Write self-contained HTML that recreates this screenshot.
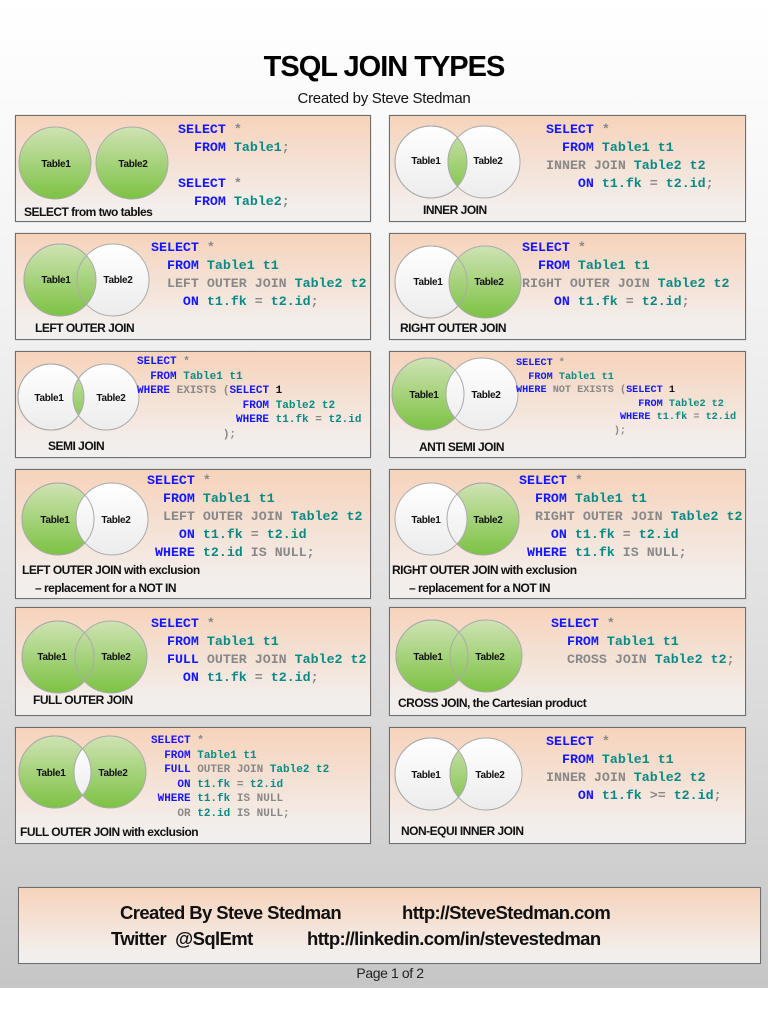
<!DOCTYPE html>
<html><head><meta charset="utf-8"><style>
*{margin:0;padding:0;box-sizing:border-box}
body{width:768px;height:1024px;position:relative;overflow:hidden;background:#fff;font-family:"Liberation Sans",sans-serif}
#bg{position:absolute;left:0;top:0;width:768px;height:988px;background:linear-gradient(#fff 0%,#f2f2f2 30%,#dcdcdc 70%,#c6c6c6 100%)}
.box{position:absolute;border:1px solid #6e6e6e;background:linear-gradient(#f6d3bb,#f3eeeb 85%,#f1efee);box-shadow:0 0 1px #aaa}
pre{position:absolute;font-family:"Liberation Mono",monospace;font-weight:bold;font-size:13.3px;line-height:18px;color:#888;white-space:pre}
pre.s{font-size:11px;line-height:14.6px}
.k{color:#1515ff}.t{color:#0a8a84}.b{color:#111}
.cap{position:absolute;font-weight:bold;font-size:12px;color:#111;letter-spacing:-0.5px;white-space:nowrap;line-height:18px}
svg{position:absolute;left:0;top:0}
svg text{font-family:"Liberation Sans",sans-serif;font-weight:bold;font-size:10px;fill:#111;text-anchor:middle;letter-spacing:-0.3px}
</style></head><body>
<div id="bg"></div>
<div style="position:absolute;left:0;width:768px;top:51px;text-align:center;font-weight:bold;font-size:29px;letter-spacing:-1px;color:#000">TSQL JOIN TYPES</div>
<div style="position:absolute;left:0;width:768px;top:90px;text-align:center;font-size:15px;color:#111;letter-spacing:-0.3px">Created by Steve Stedman</div>

<div class="box" style="left:15px;top:115px;width:356px;height:107px"></div>
<div class="box" style="left:389px;top:115px;width:357px;height:107px"></div>
<div class="box" style="left:15px;top:233px;width:356px;height:107px"></div>
<div class="box" style="left:389px;top:233px;width:357px;height:107px"></div>
<div class="box" style="left:15px;top:351px;width:356px;height:107px"></div>
<div class="box" style="left:389px;top:351px;width:357px;height:107px"></div>
<div class="box" style="left:15px;top:469px;width:356px;height:130px"></div>
<div class="box" style="left:389px;top:469px;width:357px;height:130px"></div>
<div class="box" style="left:15px;top:607px;width:356px;height:109px"></div>
<div class="box" style="left:389px;top:607px;width:357px;height:109px"></div>
<div class="box" style="left:15px;top:727px;width:356px;height:117px"></div>
<div class="box" style="left:389px;top:727px;width:357px;height:117px"></div>

<svg width="768" height="1024">
<defs>
<linearGradient id="g" x1="0" y1="0" x2="0" y2="1"><stop offset="0" stop-color="#cfe3b4"/><stop offset="1" stop-color="#7cc243"/></linearGradient>
<linearGradient id="w" x1="0" y1="0" x2="0" y2="1"><stop offset="0" stop-color="#fff"/><stop offset="1" stop-color="#ececec"/></linearGradient>
<clipPath id="c2"><circle cx="431" cy="162" r="36"/></clipPath>
<clipPath id="c3"><circle cx="60" cy="280" r="36"/></clipPath>
<clipPath id="c5"><circle cx="51" cy="397" r="33"/></clipPath>
<clipPath id="c11"><circle cx="55" cy="772" r="36"/></clipPath>
<clipPath id="c12"><circle cx="431" cy="774" r="36"/></clipPath>
</defs>
<g stroke="#aaa" stroke-width="1">
<circle cx="55" cy="163" r="36" fill="url(#g)"/><circle cx="132" cy="163" r="36" fill="url(#g)"/>

<circle cx="431" cy="162" r="36" fill="url(#w)"/><circle cx="484" cy="162" r="36" fill="url(#w)"/>
<circle cx="484" cy="162" r="36" fill="url(#g)" clip-path="url(#c2)"/><circle cx="431" cy="162" r="36" fill="none"/>

<circle cx="60" cy="280" r="36" fill="url(#g)"/><circle cx="113" cy="280" r="36" fill="url(#w)"/>
<circle cx="113" cy="280" r="36" fill="url(#g)" clip-path="url(#c3)"/><circle cx="60" cy="280" r="36" fill="none"/>

<circle cx="431" cy="282" r="36" fill="url(#w)"/><circle cx="485" cy="282" r="36" fill="url(#g)"/><circle cx="431" cy="282" r="36" fill="none"/>

<circle cx="51" cy="397" r="33" fill="url(#w)"/><circle cx="106" cy="397" r="33" fill="url(#w)"/>
<circle cx="106" cy="397" r="33" fill="url(#g)" clip-path="url(#c5)"/><circle cx="51" cy="397" r="33" fill="none"/>

<circle cx="428" cy="394" r="36" fill="url(#g)"/><circle cx="482" cy="394" r="36" fill="url(#w)"/><circle cx="428" cy="394" r="36" fill="none"/>

<circle cx="58" cy="519" r="36" fill="url(#g)"/><circle cx="112" cy="519" r="36" fill="url(#w)"/><circle cx="58" cy="519" r="36" fill="none"/>

<circle cx="483" cy="519" r="36" fill="url(#g)"/><circle cx="431" cy="519" r="36" fill="url(#w)"/><circle cx="483" cy="519" r="36" fill="none"/>

<circle cx="58" cy="657" r="36" fill="url(#g)"/><circle cx="111" cy="657" r="36" fill="url(#g)"/><circle cx="58" cy="657" r="36" fill="none"/>

<circle cx="432" cy="656" r="36" fill="url(#g)"/><circle cx="486" cy="656" r="36" fill="url(#g)"/><circle cx="432" cy="656" r="36" fill="none"/>

<circle cx="55" cy="772" r="36" fill="url(#g)"/><circle cx="110" cy="772" r="36" fill="url(#g)"/>
<circle cx="110" cy="772" r="36" fill="url(#w)" clip-path="url(#c11)"/><circle cx="55" cy="772" r="36" fill="none"/>

<circle cx="431" cy="774" r="36" fill="url(#w)"/><circle cx="486" cy="774" r="36" fill="url(#w)"/>
<circle cx="486" cy="774" r="36" fill="url(#g)" clip-path="url(#c12)"/><circle cx="431" cy="774" r="36" fill="none"/>
</g>
<g>
<text x="56" y="167">Table1</text><text x="133" y="167">Table2</text>
<text x="426" y="164">Table1</text><text x="488" y="164">Table2</text>
<text x="56" y="283">Table1</text><text x="118" y="283">Table2</text>
<text x="428" y="285">Table1</text><text x="489" y="285">Table2</text>
<text x="49" y="401">Table1</text><text x="111" y="401">Table2</text>
<text x="424" y="398">Table1</text><text x="486" y="398">Table2</text>
<text x="55" y="523">Table1</text><text x="116" y="523">Table2</text>
<text x="426" y="523">Table1</text><text x="488" y="523">Table2</text>
<text x="52" y="660">Table1</text><text x="116" y="660">Table2</text>
<text x="428" y="660">Table1</text><text x="490" y="660">Table2</text>
<text x="51" y="776">Table1</text><text x="113" y="776">Table2</text>
<text x="426" y="778">Table1</text><text x="490" y="778">Table2</text>
</g>
</svg>

<pre style="left:178px;top:121px"><span class="k">SELECT</span> *
  <span class="k">FROM</span> <span class="t">Table1</span>;

<span class="k">SELECT</span> *
  <span class="k">FROM</span> <span class="t">Table2</span>;</pre>
<div class="cap" style="left:24px;top:203px">SELECT from two tables</div>

<pre style="left:546px;top:121px"><span class="k">SELECT</span> *
  <span class="k">FROM</span> <span class="t">Table1 t1</span>
INNER JOIN <span class="t">Table2 t2</span>
    <span class="k">ON</span> <span class="t">t1.fk</span> = <span class="t">t2.id</span>;</pre>
<div class="cap" style="left:423px;top:201px">INNER JOIN</div>

<pre style="left:151px;top:239px"><span class="k">SELECT</span> *
  <span class="k">FROM</span> <span class="t">Table1 t1</span>
  LEFT OUTER JOIN <span class="t">Table2 t2</span>
    <span class="k">ON</span> <span class="t">t1.fk</span> = <span class="t">t2.id</span>;</pre>
<div class="cap" style="left:35px;top:319px">LEFT OUTER JOIN</div>

<pre style="left:522px;top:239px"><span class="k">SELECT</span> *
  <span class="k">FROM</span> <span class="t">Table1 t1</span>
RIGHT OUTER JOIN <span class="t">Table2 t2</span>
    <span class="k">ON</span> <span class="t">t1.fk</span> = <span class="t">t2.id</span>;</pre>
<div class="cap" style="left:400px;top:319px">RIGHT OUTER JOIN</div>

<pre class="s" style="left:137px;top:355px"><span class="k">SELECT</span> *
  <span class="k">FROM</span> <span class="t">Table1 t1</span>
<span class="k">WHERE</span> EXISTS (<span class="k">SELECT</span> <span class="b">1</span>
                <span class="k">FROM</span> <span class="t">Table2 t2</span>
               <span class="k">WHERE</span> <span class="t">t1.fk</span> = <span class="t">t2.id</span>
             );</pre>
<div class="cap" style="left:48px;top:437px">SEMI JOIN</div>

<pre class="s" style="left:516px;top:357px;font-size:10.2px;line-height:13.6px"><span class="k">SELECT</span> *
  <span class="k">FROM</span> <span class="t">Table1 t1</span>
<span class="k">WHERE</span> NOT EXISTS (<span class="k">SELECT</span> <span class="b">1</span>
                    <span class="k">FROM</span> <span class="t">Table2 t2</span>
                 <span class="k">WHERE</span> <span class="t">t1.fk</span> = <span class="t">t2.id</span>
                );</pre>
<div class="cap" style="left:419px;top:438px">ANTI SEMI JOIN</div>

<pre style="left:147px;top:472px"><span class="k">SELECT</span> *
  <span class="k">FROM</span> <span class="t">Table1 t1</span>
  LEFT OUTER JOIN <span class="t">Table2 t2</span>
    <span class="k">ON</span> <span class="t">t1.fk</span> = <span class="t">t2.id</span>
 <span class="k">WHERE</span> <span class="t">t2.id</span> IS NULL;</pre>
<div class="cap" style="left:22px;top:561px">LEFT OUTER JOIN with exclusion</div>
<div class="cap" style="left:35px;top:579px">– replacement for a NOT IN</div>

<pre style="left:519px;top:472px"><span class="k">SELECT</span> *
  <span class="k">FROM</span> <span class="t">Table1 t1</span>
  RIGHT OUTER JOIN <span class="t">Table2 t2</span>
    <span class="k">ON</span> <span class="t">t1.fk</span> = <span class="t">t2.id</span>
 <span class="k">WHERE</span> <span class="t">t1.fk</span> IS NULL;</pre>
<div class="cap" style="left:392px;top:561px">RIGHT OUTER JOIN with exclusion</div>
<div class="cap" style="left:409px;top:579px">– replacement for a NOT IN</div>

<pre style="left:151px;top:615px"><span class="k">SELECT</span> *
  <span class="k">FROM</span> <span class="t">Table1 t1</span>
  <span class="k">FULL</span> OUTER JOIN <span class="t">Table2 t2</span>
    <span class="k">ON</span> <span class="t">t1.fk</span> = <span class="t">t2.id</span>;</pre>
<div class="cap" style="left:33px;top:691px">FULL OUTER JOIN</div>

<pre style="left:551px;top:615px"><span class="k">SELECT</span> *
  <span class="k">FROM</span> <span class="t">Table1 t1</span>
  CROSS JOIN <span class="t">Table2 t2</span>;</pre>
<div class="cap" style="left:398px;top:694px">CROSS JOIN, the Cartesian product</div>

<pre class="s" style="left:151px;top:734px"><span class="k">SELECT</span> *
  <span class="k">FROM</span> <span class="t">Table1 t1</span>
  <span class="k">FULL</span> OUTER JOIN <span class="t">Table2 t2</span>
    <span class="k">ON</span> <span class="t">t1.fk</span> = <span class="t">t2.id</span>
 <span class="k">WHERE</span> <span class="t">t1.fk</span> IS NULL
    OR <span class="t">t2.id</span> IS NULL;</pre>
<div class="cap" style="left:20px;top:823px">FULL OUTER JOIN with exclusion</div>

<pre style="left:546px;top:733px"><span class="k">SELECT</span> *
  <span class="k">FROM</span> <span class="t">Table1 t1</span>
INNER JOIN <span class="t">Table2 t2</span>
    <span class="k">ON</span> <span class="t">t1.fk</span> &gt;= <span class="t">t2.id</span>;</pre>
<div class="cap" style="left:401px;top:822px">NON-EQUI INNER JOIN</div>

<div class="box" style="left:18px;top:887px;width:743px;height:77px"></div>
<div style="position:absolute;left:0;width:768px;top:900px;font-weight:bold;font-size:18.5px;letter-spacing:-0.6px;color:#111;line-height:26px">
<div style="position:absolute;left:120px;top:0">Created By Steve Stedman</div>
<div style="position:absolute;left:402px;top:0">http://SteveStedman.com</div>
<div style="position:absolute;left:111px;top:26px">Twitter&nbsp; @SqlEmt</div>
<div style="position:absolute;left:307px;top:26px">http://linkedin.com/in/stevestedman</div>
</div>
<div style="position:absolute;left:0;width:780px;top:965px;text-align:center;font-size:14px;color:#222;letter-spacing:-0.4px">Page 1 of 2</div>
</body></html>
